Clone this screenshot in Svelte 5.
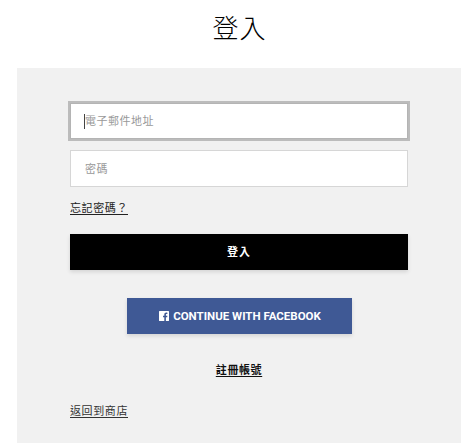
<script>
	let email = $state('');
	let password = $state('');
</script>

<main class="page">
	<h1>登入</h1>
	<section class="panel">
		<form class="form" onsubmit={(e) => e.preventDefault()}>
			<div class="fields">
				<div class="caret-wrap">
					<input class="focused" type="email" placeholder="電子郵件地址" bind:value={email} />
					<span class="caret"></span>
				</div>
				<input type="password" placeholder="密碼" bind:value={password} />
			</div>
			<a class="link forgot" href="#forgot">忘記密碼？</a>
			<button class="submit" type="submit">登入</button>
		</form>
		<div class="center">
			<button class="facebook" type="button">
				<svg viewBox="0 0 10 10" width="10" height="10" aria-hidden="true">
					<path fill="#fff" d="M.6 0h8.800c.3 0 .6.3.6.6v8.800c0 .3-.3.6-.6.6H6.900V6.200h1.300l.2-1.500H6.900v-1c0-.4.1-.7.7-.7h.8V1.700C8.200 1.650 7.800 1.600 7.300 1.600c-1.200 0-2 .7-2 2v1.100H4v1.500h1.300V10H.6C.3 10 0 9.700 0 9.400V.6C0 .3.3 0 .6 0z"/>
				</svg>
				CONTINUE WITH FACEBOOK
			</button>
			<a class="link register" href="#register">註冊帳號</a>
		</div>
		<a class="link back" href="#shop">返回到商店</a>
	</section>
</main>

<style>
	:global(body) {
		margin: 0;
		background: #fff;
	}
	.page {
		width: 474px;
		height: 444px;
		overflow: hidden;
		padding: 0 13px 0 17px;
		box-sizing: border-box;
		font-family: "Liberation Sans", "Noto Sans CJK TC", sans-serif;
		color: #111;
	}
	h1 {
		margin: 0;
		height: 68px;
		padding-top: 11px;
		padding-left: 1px;
		box-sizing: border-box;
		font-size: 26px;
		line-height: 36px;
		font-weight: 300;
		letter-spacing: 1px;
		text-align: center;
		color: #000;
	}
	.panel {
		background: #f1f1f1;
		height: 375px;
		padding: 35px 53px 0;
		box-sizing: border-box;
	}
	.form {
		display: flex;
		flex-direction: column;
		align-items: flex-start;
	}
	.fields {
		display: flex;
		flex-direction: column;
		gap: 11px;
		width: 100%;
	}
	.caret-wrap {
		position: relative;
	}
	.caret {
		position: absolute;
		left: 14px;
		top: 11px;
		width: 1px;
		height: 15px;
		background: #444;
	}
	input {
		display: block;
		width: 100%;
		height: 37px;
		box-sizing: border-box;
		padding: 0 14px;
		background: #fff;
		border: 1px solid #d6d6d6;
		border-radius: 0;
		outline: none;
		font-family: inherit;
		font-size: 11px;
		letter-spacing: 0.5px;
	}
	input.focused {
		height: 36px;
		border: 1px solid #b4b4b4;
		box-shadow: 0 0 0 2px #bcbcbc;
	}
	input::placeholder {
		color: #999;
		opacity: 1;
	}
	.link {
		color: #222;
		font-size: 11px;
		line-height: 16px;
		letter-spacing: 0.6px;
		text-decoration: underline;
		text-underline-offset: 2px;
	}
	.forgot {
		margin-top: 13px;
	}
	.submit {
		width: 100%;
		height: 36px;
		margin-top: 18px;
		padding: 0 0 2px;
		background: #000;
		color: #fff;
		border: 0;
		font-family: inherit;
		font-size: 11px;
		font-weight: 700;
		letter-spacing: 1px;
		box-shadow: 0 2px 4px rgba(0, 0, 0, 0.12);
	}
	.center {
		display: flex;
		flex-direction: column;
		align-items: center;
		margin-top: 28px;
	}
	.facebook {
		display: flex;
		align-items: center;
		justify-content: center;
		gap: 4px;
		width: 225px;
		height: 36px;
		padding: 0 0 0 2px;
		background: #3f5995;
		color: #fff;
		border: 0;
		font-family: "Roboto", "Liberation Sans", sans-serif;
		font-size: 11.500px;
		font-weight: 700;
		letter-spacing: 0;
		box-shadow: 0 2px 4px rgba(0, 0, 0, 0.12);
	}
	.register {
		margin-top: 28px;
		font-weight: 700;
		color: #111;
	}
	.back {
		display: inline-block;
		margin-top: 25px;
		color: #333;
	}
</style>
